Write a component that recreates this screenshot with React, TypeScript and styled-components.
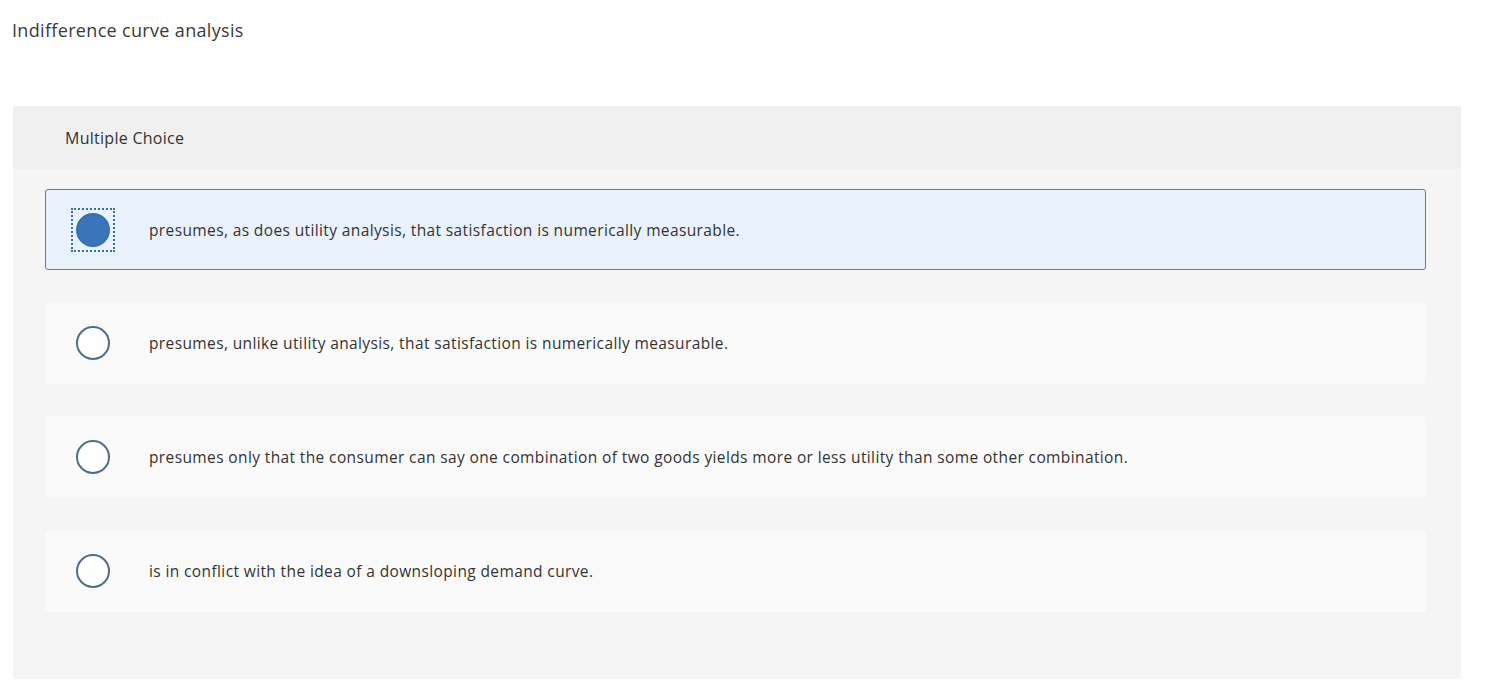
import React from "react";
import styled, { createGlobalStyle } from "styled-components";

const Global = createGlobalStyle`
  body { margin: 0; background: #fff; font-family: "Open Sans", Lato, sans-serif; color: #333; }
`;

const Page = styled.div`
  display: flex;
  flex-direction: column;
`;

const Title = styled.h1`
  margin: 0;
  padding: 18px 0 0 12px;
  height: 106px;
  box-sizing: border-box;
  font-size: 18px;
  font-weight: 400;
  line-height: 24px;
  letter-spacing: 0.33px;
  color: #3a3a3a;
`;

const Panel = styled.section`
  margin-left: 13px;
  width: 1448px;
  background: #f5f5f5;
  padding-bottom: 67px;
`;

const Header = styled.div`
  height: 63px;
  background: #f0f0f0;
  display: flex;
  align-items: center;
  padding-left: 52px;
  font-size: 16px;
  letter-spacing: 0.27px;
  color: #333;
`;

const Options = styled.div`
  display: flex;
  flex-direction: column;
  gap: 32px;
  padding: 20px 35px 0 32px;
`;

const Option = styled.label<{ $selected?: boolean }>`
  box-sizing: border-box;
  height: ${(p) => (p.$selected ? 81 : 82)}px;
  display: flex;
  align-items: center;
  padding-left: ${(p) => (p.$selected ? 30 : 31)}px;
  background: ${(p) => (p.$selected ? "#e9f2fb" : "#fafafa")};
  border: ${(p) => (p.$selected ? "1px solid #5b80ad" : "none")};
  border-radius: 3px;
  font-size: 15.5px;
  letter-spacing: 0.38px;
  color: #333;
  cursor: pointer;
`;

const RadioWrap = styled.span<{ $focused?: boolean }>`
  width: 44px;
  height: 44px;
  margin-left: -5px;
  box-sizing: border-box;
  display: flex;
  align-items: center;
  justify-content: center;
  border: 2px dotted ${(p) => (p.$focused ? "#3a6ea5" : "transparent")};
  flex-shrink: 0;
`;

const Radio = styled.span<{ $checked?: boolean }>`
  width: 34px;
  height: 34px;
  box-sizing: border-box;
  border-radius: 50%;
  border: 2px solid ${(p) => (p.$checked ? "#3a6fae" : "#4f6d8c")};
  background: ${(p) => (p.$checked ? "#3a74b9" : "#fff")};
`;

const Text = styled.span`
  margin-left: 34px;
`;

const choices = [
  "presumes, as does utility analysis, that satisfaction is numerically measurable.",
  "presumes, unlike utility analysis, that satisfaction is numerically measurable.",
  "presumes only that the consumer can say one combination of two goods yields more or less utility than some other combination.",
  "is in conflict with the idea of a downsloping demand curve.",
];

export default function App() {
  return (
    <Page>
      <Global />
      <Title>Indifference curve analysis</Title>
      <Panel>
        <Header>Multiple Choice</Header>
        <Options>
          {choices.map((c, i) => (
            <Option key={i} $selected={i === 0}>
              <RadioWrap $focused={i === 0}>
                <Radio $checked={i === 0} />
              </RadioWrap>
              <Text>{c}</Text>
            </Option>
          ))}
        </Options>
      </Panel>
    </Page>
  );
}
